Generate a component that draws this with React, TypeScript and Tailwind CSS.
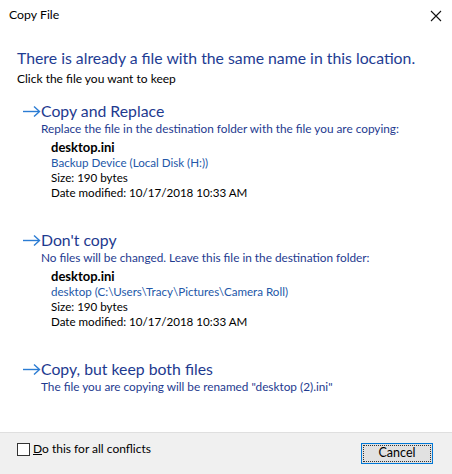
import React from "react";

const Arrow = () => (
  <svg width="19" height="12" viewBox="0 0 19 12" className="shrink-0">
    <path d="M1 6.5 H17" stroke="#2b7cd3" strokeWidth="1.4" fill="none" />
    <path d="M12 1.5 L17.5 6.5 L12 11.5" stroke="#2b7cd3" strokeWidth="1.4" fill="none" />
  </svg>
);

type OptProps = {
  title: string;
  sub: string;
  file?: { loc: string };
};

const Option = ({ title, sub, file }: OptProps) => (
  <div className="flex flex-col">
    <div className="flex items-center h-[20px] ml-[22px]">
      <Arrow />
      <span className="text-[15.8px] leading-[20px] text-[#1e3a8f]">{title}</span>
    </div>
    <div className="ml-[41px] text-[11.8px] leading-[15px] text-[#1e3a8f]">{sub}</div>
    {file && (
      <div className="ml-[51px] mt-[4px] flex flex-col text-[11.6px] leading-[15px]">
        <span className="font-bold text-[13px] text-black">desktop.ini</span>
        <span className="text-[#2357a8]">{file.loc}</span>
        <span className="text-black">Size: 190 bytes</span>
        <span className="text-black">Date modified: 10/17/2018 10:33 AM</span>
      </div>
    )}
  </div>
);

export default function App() {
  return (
    <div
      className="w-[452px] h-[474px] bg-white flex flex-col text-black overflow-hidden"
      style={{ fontFamily: 'Lato, "Open Sans", sans-serif' }}
    >
      <div className="h-[31px] flex items-center justify-between pl-[9px] pr-[10px]">
        <span className="text-[12.3px]">Copy File</span>
        <svg width="12" height="12" viewBox="0 0 12 12">
          <path d="M1 1 L11 11 M11 1 L1 11" stroke="#111" strokeWidth="1.1" />
        </svg>
      </div>
      <div className="flex-1 flex flex-col">
        <div className="mt-[16px] ml-[17px] text-[15.8px] leading-[22px] text-[#1e3c93]">
          There is already a file with the same name in this location.
        </div>
        <div className="mt-[2px] ml-[17px] text-[12px] leading-[15px]">Click the file you want to keep</div>
        <div className="mt-[15px]">
          <Option
            title="Copy and Replace"
            sub="Replace the file in the destination folder with the file you are copying:"
            file={{ loc: "Backup Device (Local Disk (H:))" }}
          />
        </div>
        <div className="mt-[30px]">
          <Option
            title="Don't copy"
            sub="No files will be changed. Leave this file in the destination folder:"
            file={{ loc: "desktop (C:\\Users\\Tracy\\Pictures\\Camera Roll)" }}
          />
        </div>
        <div className="mt-[30px]">
          <Option title="Copy, but keep both files" sub={'The file you are copying will be renamed "desktop (2).ini"'} />
        </div>
      </div>
      <div className="h-[42px] bg-[#f0f0f0] border-t border-[#dfdfdf] flex items-start justify-between pl-[17px] pr-[19px]">
        <label className="flex items-center mt-[7px] text-[12px]">
          <span className="w-[13px] h-[13px] border border-[#333] bg-white mr-[3px]" />
          <span>
            <span className="underline">D</span>o this for all conflicts
          </span>
        </label>
        <div className="mt-[10px] w-[72px] h-[21px] border border-[#0078d7] bg-[#e1e1e1] p-[1px]">
          <div className="w-full h-full border border-dotted border-[#333] flex items-center justify-center text-[12.5px]">
            Cancel
          </div>
        </div>
      </div>
    </div>
  );
}
